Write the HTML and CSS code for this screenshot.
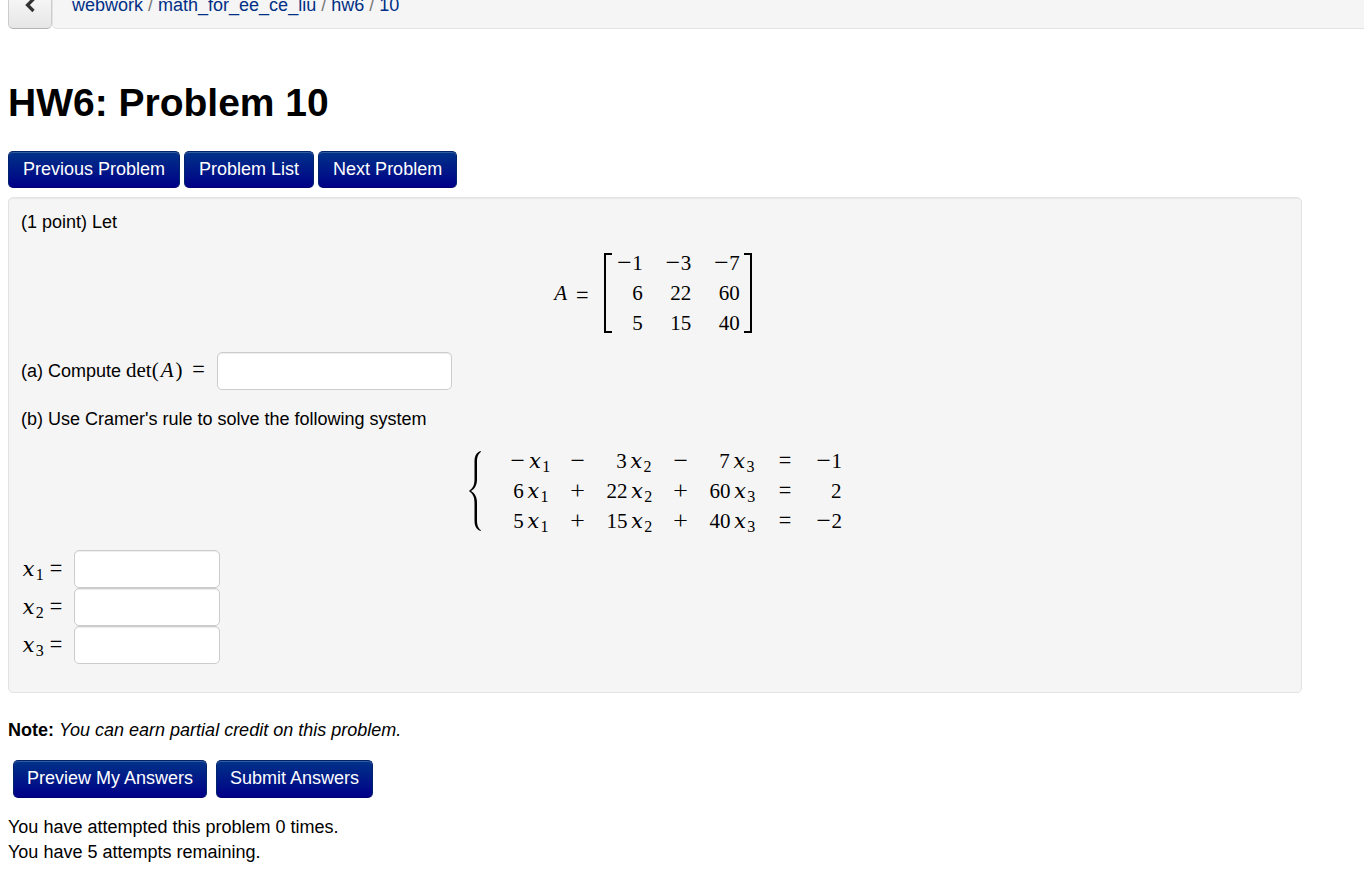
FILE: index.html
```html
<!DOCTYPE html>
<html lang="en">
<head>
<meta charset="utf-8">
<title>HW6: Problem 10</title>
<link rel="stylesheet" href="styles.css">
</head>
<body>
<header class="topbar">
  <button class="back" type="button" aria-label="Toggle menu">
    <svg width="12" height="16" viewBox="0 0 12 16" aria-hidden="true"><path d="M9.5 2 3.5 8l6 6" fill="none" stroke="#333" stroke-width="3.2"/></svg>
  </button>
  <nav class="crumbs" aria-label="Breadcrumb">
    <a href="#">webwork</a><span class="sep">/</span><a href="#">math_for_ee_ce_liu</a><span class="sep">/</span><a href="#">hw6</a><span class="sep">/</span><a href="#">10</a>
  </nav>
</header>
<main class="page">
  <h1 class="title">HW6: Problem 10</h1>
  <nav class="problem-nav">
    <a class="btn" href="#">Previous Problem</a>
    <a class="btn" href="#">Problem List</a>
    <a class="btn" href="#">Next Problem</a>
  </nav>
  <form class="problem-form">
    <section class="panel">
      <p class="text">(1 point) Let</p>
      <div class="math display matrix-eq">
        <i>A</i><span class="op">=</span>
        <div class="matrix">
          <span><span class="op">−</span>1</span><span><span class="op">−</span>3</span><span><span class="op">−</span>7</span>
          <span>6</span><span>22</span><span>60</span>
          <span>5</span><span>15</span><span>40</span>
        </div>
      </div>
      <div class="answer">
        <label for="det">(a) Compute <span class="math det">det(<i>A</i>)<span class="op">=</span></span></label>
        <input class="field wide" id="det" type="text">
      </div>
      <p class="text part-b">(b) Use Cramer's rule to solve the following system</p>
      <div class="math display">
        <svg class="brace" width="14" height="82" viewBox="1 0 14 82" aria-hidden="true"><path d="M12.500 1C8 3 6.500 6 6.500 12v17c0 6-1.500 9-5.500 12 4 3 5.500 6 5.500 12v17c0 6 1.500 9 6 11l.5-.7C10 78 9 75 9 70V53c0-6-2-9.500-6-12 4-2.500 6-6 6-12V12c0-5 1-8 4-10.300z"/></svg>
        <div class="system">
          <span><span class="op">−</span><span class="v">𝑥<sub>1</sub></span></span><span class="op">−</span><span>3<span class="v">𝑥<sub>2</sub></span></span><span class="op">−</span><span>7<span class="v">𝑥<sub>3</sub></span></span><span class="op">=</span><span><span class="op">−</span>1</span>
          <span>6<span class="v">𝑥<sub>1</sub></span></span><span class="op">+</span><span>22<span class="v">𝑥<sub>2</sub></span></span><span class="op">+</span><span>60<span class="v">𝑥<sub>3</sub></span></span><span class="op">=</span><span>2</span>
          <span>5<span class="v">𝑥<sub>1</sub></span></span><span class="op">+</span><span>15<span class="v">𝑥<sub>2</sub></span></span><span class="op">+</span><span>40<span class="v">𝑥<sub>3</sub></span></span><span class="op">=</span><span><span class="op">−</span>2</span>
        </div>
      </div>
      <div class="unknowns">
        <label class="math" for="x1"><span>𝑥<sub>1</sub></span><span class="op">=</span></label><input class="field" id="x1" type="text">
        <label class="math" for="x2"><span>𝑥<sub>2</sub></span><span class="op">=</span></label><input class="field" id="x2" type="text">
        <label class="math" for="x3"><span>𝑥<sub>3</sub></span><span class="op">=</span></label><input class="field" id="x3" type="text">
      </div>
    </section>
    <p class="text note"><b>Note:</b> <i>You can earn partial credit on this problem.</i></p>
    <div class="actions">
      <button class="btn" type="button">Preview My Answers</button>
      <button class="btn" type="button">Submit Answers</button>
    </div>
  </form>
  <p class="text">You have attempted this problem 0 times.<br>You have 5 attempts remaining.</p>
</main>
</body>
</html>
```
FILE: styles.css
```css
* { box-sizing: border-box; }
body {
  margin: 0;
  background: #fff;
  color: #000;
  font: 18px/25px "Liberation Sans", Arial, sans-serif;
}
a { color: #002f86; text-decoration: none; }
.topbar {
  display: flex;
  align-items: flex-end;
  height: 29px;
  overflow: hidden;
  padding-left: 8px;
}
.back {
  display: flex;
  align-items: center;
  justify-content: center;
  flex: none;
  width: 44px;
  height: 48px;
  padding: 0;
  border: 1px solid #ccc;
  border-bottom-color: #b3b3b3;
  border-radius: 5px;
  background: linear-gradient(#fff, #e6e6e6);
}
.crumbs {
  flex: 1;
  height: 48px;
  padding: 11px 19px;
  border: 1px solid #e3e3e3;
  border-right: 0;
  border-radius: 5px 0 0 5px;
  background: #f5f5f5;
  white-space: nowrap;
}
.sep { padding: 0 5px; color: #777; }
.page { padding: 49px 62px 20px 8px; }
.title { margin: 0 0 24px; font-size: 39px; line-height: 49px; }
.problem-nav { display: flex; gap: 4px; margin-bottom: 9px; }
.btn {
  padding: 5px 14px;
  border: 1px solid #00246b;
  border-bottom-color: #000070;
  border-radius: 5px;
  background: linear-gradient(#003388, #000088);
  box-shadow: inset 0 1px 0 rgba(255, 255, 255, .2);
  color: #fff;
  font: inherit;
  white-space: nowrap;
}
.panel {
  padding: 12px 12px 28px;
  border: 1px solid #e3e3e3;
  border-radius: 5px;
  background: #f5f5f5;
  box-shadow: inset 0 1px 1px rgba(0, 0, 0, .05);
}
.text { margin: 0; }
.math { font-family: "Liberation Serif", "DejaVu Math TeX Gyre", serif; font-size: 21px; line-height: 20px; }
.math sub { font-size: 16px; line-height: 0; vertical-align: -4px; }
.op {
  display: inline-flex;
  justify-content: center;
  width: 16px;
  font-family: Inter, sans-serif;
  font-size: 28px;
  font-weight: 200;
  line-height: 14px;
}
.v { margin-left: 2px; }
.display { display: flex; align-items: center; justify-content: center; margin: 18px 0; }
.matrix-eq { gap: 7px; margin-bottom: 19px; padding-right: 4px; }
.matrix, .system {
  display: grid;
  grid-auto-rows: 20px;
  row-gap: 10px;
  align-items: baseline;
  text-align: right;
  white-space: nowrap;
}
.matrix {
  grid-template-columns: repeat(3, auto);
  column-gap: 22px;
  margin-left: 7px;
  padding: 0 10px;
  background:
    linear-gradient(#000, #000) left top / 6px 2px,
    linear-gradient(#000, #000) left bottom / 6px 2px,
    linear-gradient(#000, #000) right top / 6px 2px,
    linear-gradient(#000, #000) right bottom / 6px 2px;
  background-repeat: no-repeat;
  border: solid #000;
  border-width: 0 2px;
}
.answer { display: flex; align-items: center; gap: 10px; }
.det i { margin: 0 2px; }
.det .op { margin-left: 8px; }
.field {
  width: 146px;
  height: 38px;
  padding: 5px 8px;
  border: 1px solid #ccc;
  border-radius: 5px;
  background: #fff;
  box-shadow: inset 0 1px 1px rgba(0, 0, 0, .075);
  font: inherit;
}
.wide { width: 235px; }
.part-b { margin-top: 17px; }
.brace { flex: none; margin-right: 27px; }
.system {
  grid-template-columns: 39px 16px 45px 16px 45px 19px 26px;
  column-gap: 21px;
}
.system > .op { justify-self: center; }
.unknowns { display: grid; grid-template-columns: 43px 146px; column-gap: 10px; align-items: center; }
.unknowns label { display: flex; align-items: baseline; justify-content: space-between; }
.note { margin-top: 25px; }
.actions { display: flex; gap: 9px; margin: 17px 5px; }
.actions .btn { padding: 5px 13px 6px; }
```
